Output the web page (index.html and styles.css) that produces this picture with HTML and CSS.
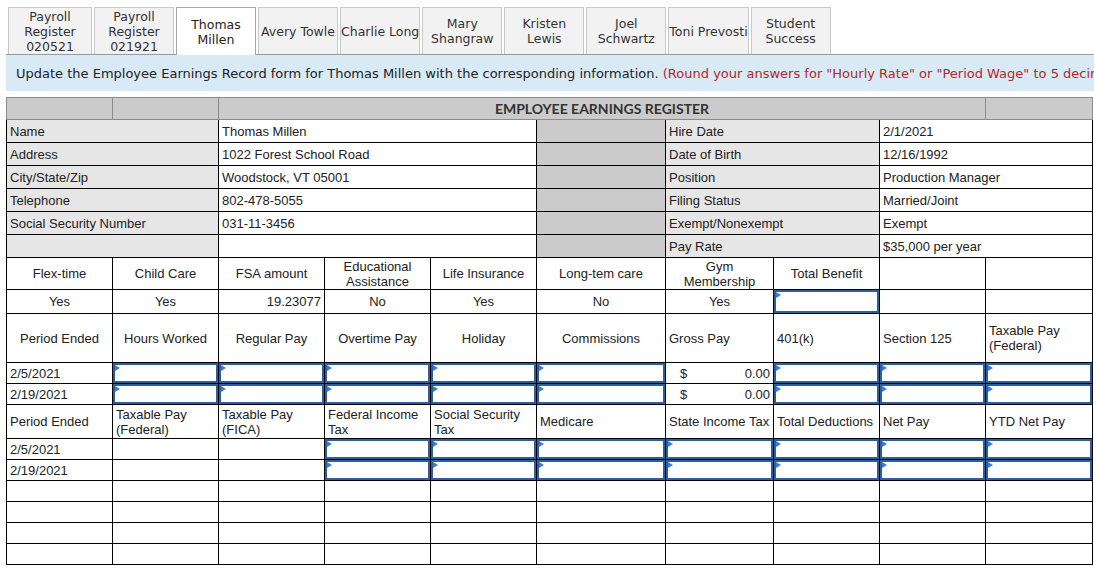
FILE: index.html
```html
<!DOCTYPE html>
<html lang="en">

<head>
    <meta charset="UTF-8">
    <meta name="viewport" content="width=device-width, initial-scale=1.0">
    <title>Employee Earnings Register</title>
    <link rel="stylesheet" href="styles.css">
</head>

<body>

    <div class="page">
        <nav class="tabs">
            <a class="tab tab-wide">Payroll<br>Register<br>020521</a>
            <a class="tab">Payroll<br>Register<br>021921</a>
            <a class="tab active">Thomas<br>Millen</a>
            <a class="tab">Avery Towle</a>
            <a class="tab">Charlie Long</a>
            <a class="tab">Mary<br>Shangraw</a>
            <a class="tab">Kristen<br>Lewis</a>
            <a class="tab">Joel<br>Schwartz</a>
            <a class="tab">Toni Prevosti</a>
            <a class="tab">Student<br>Success</a>
        </nav>

        <div class="notice">
            Update the Employee Earnings Record form for Thomas Millen with the corresponding information.
            <span class="hint">(Round your answers for "Hourly Rate" or "Period Wage" to 5 decimal places.)</span>
        </div>

        <table class="register">
            <colgroup>
                <col style="width: 106px">
                <col style="width: 106px">
                <col style="width: 106px">
                <col style="width: 106px">
                <col style="width: 106px">
                <col style="width: 129px">
                <col style="width: 108px">
                <col style="width: 106px">
                <col style="width: 106px">
                <col style="width: 107px">
            </colgroup>
            <tbody>
                <tr class="title">
                    <td></td>
                    <td></td>
                    <td colspan="7">EMPLOYEE EARNINGS REGISTER</td>
                    <td></td>
                </tr>

                <!-- employee details -->
                <tr class="info">
                    <td colspan="2" class="label">Name</td>
                    <td colspan="3">Thomas Millen</td>
                    <td class="shade"></td>
                    <td colspan="2" class="label">Hire Date</td>
                    <td colspan="2">2/1/2021</td>
                </tr>
                <tr class="info">
                    <td colspan="2" class="label">Address</td>
                    <td colspan="3">1022 Forest School Road</td>
                    <td class="shade"></td>
                    <td colspan="2" class="label">Date of Birth</td>
                    <td colspan="2">12/16/1992</td>
                </tr>
                <tr class="info">
                    <td colspan="2" class="label">City/State/Zip</td>
                    <td colspan="3">Woodstock, VT 05001</td>
                    <td class="shade"></td>
                    <td colspan="2" class="label">Position</td>
                    <td colspan="2">Production Manager</td>
                </tr>
                <tr class="info">
                    <td colspan="2" class="label">Telephone</td>
                    <td colspan="3">802-478-5055</td>
                    <td class="shade"></td>
                    <td colspan="2" class="label">Filing Status</td>
                    <td colspan="2">Married/Joint</td>
                </tr>
                <tr class="info">
                    <td colspan="2" class="label">Social Security Number</td>
                    <td colspan="3">031-11-3456</td>
                    <td class="shade"></td>
                    <td colspan="2" class="label">Exempt/Nonexempt</td>
                    <td colspan="2">Exempt</td>
                </tr>
                <tr class="info">
                    <td colspan="2" class="label"></td>
                    <td colspan="3"></td>
                    <td class="shade"></td>
                    <td colspan="2" class="label">Pay Rate</td>
                    <td colspan="2">$35,000 per year</td>
                </tr>

                <!-- benefits -->
                <tr class="bhead center">
                    <td>Flex-time</td>
                    <td>Child Care</td>
                    <td>FSA amount</td>
                    <td>Educational<br>Assistance</td>
                    <td>Life Insurance</td>
                    <td>Long-tem care</td>
                    <td>Gym<br>Membership</td>
                    <td>Total Benefit</td>
                    <td></td>
                    <td></td>
                </tr>
                <tr class="bvalues center">
                    <td>Yes</td>
                    <td>Yes</td>
                    <td class="right">19.23077</td>
                    <td>No</td>
                    <td>Yes</td>
                    <td>No</td>
                    <td>Yes</td>
                    <td class="field"></td>
                    <td></td>
                    <td></td>
                </tr>

                <!-- earnings -->
                <tr class="phead">
                    <td class="center">Period Ended</td>
                    <td class="center">Hours Worked</td>
                    <td class="center">Regular Pay</td>
                    <td class="center">Overtime Pay</td>
                    <td class="center">Holiday</td>
                    <td class="center">Commissions</td>
                    <td>Gross Pay</td>
                    <td>401(k)</td>
                    <td>Section 125</td>
                    <td>Taxable Pay<br>(Federal)</td>
                </tr>
                <tr class="data">
                    <td>2/5/2021</td>
                    <td class="field"></td>
                    <td class="field"></td>
                    <td class="field"></td>
                    <td class="field"></td>
                    <td class="field"></td>
                    <td><div class="money"><span>$</span><span>0.00</span></div></td>
                    <td class="field"></td>
                    <td class="field"></td>
                    <td class="field"></td>
                </tr>
                <tr class="data">
                    <td>2/19/2021</td>
                    <td class="field"></td>
                    <td class="field"></td>
                    <td class="field"></td>
                    <td class="field"></td>
                    <td class="field"></td>
                    <td><div class="money"><span>$</span><span>0.00</span></div></td>
                    <td class="field"></td>
                    <td class="field"></td>
                    <td class="field"></td>
                </tr>

                <!-- deductions -->
                <tr class="dhead">
                    <td>Period Ended</td>
                    <td>Taxable Pay<br>(Federal)</td>
                    <td>Taxable Pay<br>(FICA)</td>
                    <td>Federal Income<br>Tax</td>
                    <td>Social Security<br>Tax</td>
                    <td>Medicare</td>
                    <td>State Income Tax</td>
                    <td>Total Deductions</td>
                    <td>Net Pay</td>
                    <td>YTD Net Pay</td>
                </tr>
                <tr class="data">
                    <td>2/5/2021</td>
                    <td></td>
                    <td></td>
                    <td class="field"></td>
                    <td class="field"></td>
                    <td class="field"></td>
                    <td class="field"></td>
                    <td class="field"></td>
                    <td class="field"></td>
                    <td class="field"></td>
                </tr>
                <tr class="data">
                    <td>2/19/2021</td>
                    <td></td>
                    <td></td>
                    <td class="field"></td>
                    <td class="field"></td>
                    <td class="field"></td>
                    <td class="field"></td>
                    <td class="field"></td>
                    <td class="field"></td>
                    <td class="field"></td>
                </tr>

                <tr class="data"><td></td><td></td><td></td><td></td><td></td><td></td><td></td><td></td><td></td><td></td></tr>
                <tr class="data"><td></td><td></td><td></td><td></td><td></td><td></td><td></td><td></td><td></td><td></td></tr>
                <tr class="data"><td></td><td></td><td></td><td></td><td></td><td></td><td></td><td></td><td></td><td></td></tr>
                <tr class="data"><td></td><td></td><td></td><td></td><td></td><td></td><td></td><td></td><td></td><td></td></tr>
            </tbody>
        </table>
    </div>

</body>

</html>
```

FILE: styles.css
```css
body {
    margin: 0;
    font-family: "DejaVu Sans", Verdana, sans-serif;
    color: #222;
    background-color: #fff;
}

.page {
    padding-left: 6px;
    overflow: hidden;
}

/* tabs */

.tabs {
    display: flex;
    align-items: flex-end;
    margin-top: 7px;
    padding-left: 2px;
    border-bottom: 1px solid #9a9a9a;
}

.tab {
    box-sizing: border-box;
    flex: 0 0 80px;
    height: 47px;
    margin-right: 2px;
    display: flex;
    align-items: center;
    justify-content: center;
    text-align: center;
    font-size: 12.5px;
    line-height: 15px;
    color: #333;
    background-color: #f2f2f2;
    border: 1px solid #c8c8c8;
    border-bottom: none;
    white-space: nowrap;
}

.tab-wide {
    flex-basis: 84px;
}

.tab.active {
    height: 48px;
    margin-bottom: -1px;
    background-color: #fff;
    border-color: #a6a6a6;
    color: #222;
}

/* instruction bar */

.notice {
    height: 36px;
    line-height: 37px;
    padding-left: 10px;
    margin-bottom: 6px;
    background-color: #d9eaf7;
    font-size: 13px;
    color: #222;
    white-space: nowrap;
    overflow: hidden;
}

.hint {
    color: #b3262d;
}

/* register table */

.register {
    border-collapse: collapse;
    table-layout: fixed;
    width: 1086px;
    font-family: "Liberation Sans", Arial, sans-serif;
    font-size: 13px;
    color: #222;
}

.register td {
    border: 1px solid #000;
    padding: 0 3px;
    line-height: 15px;
    vertical-align: middle;
    overflow: hidden;
}

.title td {
    height: 21px;
    background-color: #cbcbcb;
    border-color: #8c8c8c;
    text-align: center;
    font-family: Lato, "Liberation Sans", sans-serif;
    font-weight: 700;
    font-size: 14px;
    color: #333;
}

.info td {
    height: 22px;
}

.label {
    background-color: #e6e6e6;
}

.shade {
    background-color: #cbcbcb;
}

.bhead td {
    height: 31px;
}

.bvalues td {
    height: 23px;
}

.phead td {
    height: 48px;
}

.dhead td {
    height: 33px;
}

.data td {
    height: 20px;
}

.center td,
td.center {
    text-align: center;
}

.register td.right {
    text-align: right;
}

td.field {
    position: relative;
    box-shadow: inset 0 0 0 2px #2f5d9e;
}

td.field::before {
    content: "";
    position: absolute;
    left: 2px;
    top: 2px;
    border-left: 5px solid #3a7bd5;
    border-top: 3px solid transparent;
    border-bottom: 3px solid transparent;
}

.money {
    display: flex;
    justify-content: space-between;
    padding-left: 11px;
}
```
